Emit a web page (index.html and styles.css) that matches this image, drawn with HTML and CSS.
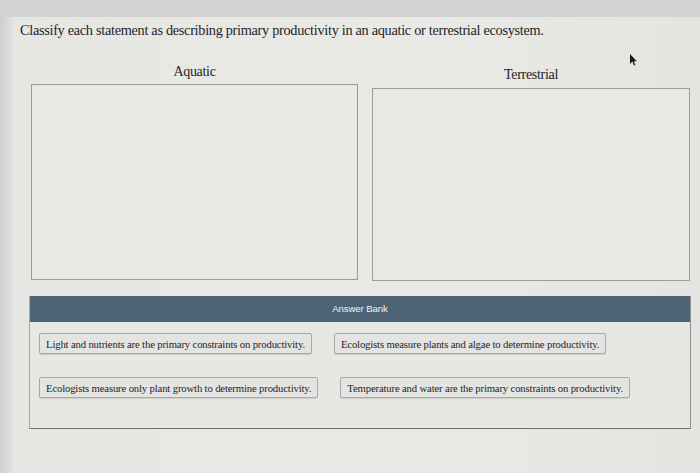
FILE: index.html
```html
<!DOCTYPE html>
<html>
<head>
<meta charset="utf-8">
<link rel="stylesheet" href="styles.css">
</head>
<body>
<div class="topbar"></div>
<main class="page">
  <h1 class="prompt">Classify each statement as describing primary productivity in an aquatic or terrestrial ecosystem.</h1>
  <div class="bins">
    <section class="bin">
      <div class="bin-label aq">Aquatic</div>
      <div class="bin-box aq-box"></div>
    </section>
    <section class="bin">
      <div class="bin-label tr">Terrestrial</div>
      <div class="bin-box tr-box"></div>
    </section>
  </div>
  <section class="bank">
    <div class="bank-head">Answer Bank</div>
    <div class="bank-body">
      <div class="bank-row">
        <div class="card">Light and nutrients are the primary constraints on productivity.</div>
        <div class="card">Ecologists measure plants and algae to determine productivity.</div>
      </div>
      <div class="bank-row">
        <div class="card">Ecologists measure only plant growth to determine productivity.</div>
        <div class="card">Temperature and water are the primary constraints on productivity.</div>
      </div>
    </div>
  </section>
</main>
<svg class="cursor" width="8" height="12" viewBox="0 0 8 12"><path d="M1 0 L1 10 L3.4 7.6 L5 11.5 L6.4 10.9 L4.8 7.2 L7.8 7.2 Z" fill="#1a1a1a"/></svg>
</body>
</html>
```
FILE: styles.css
```css
html, body {
  margin: 0;
  padding: 0;
}
body {
  position: relative;
  width: 700px;
  height: 473px;
  overflow: hidden;
  background: linear-gradient(90deg, #cfcfcd 0px, #dcdcda 10px, #e6e6e3 14px, #e9e9e6 60%, #e4e4e1 100%);
  font-family: "Liberation Serif", "Times New Roman", serif;
  color: #2a2a2a;
}
.topbar {
  height: 17px;
  background: #d3d3d1;
}
.page {
  padding: 0 0 0 20px;
}
.prompt {
  margin: 0;
  padding-top: 5px;
  font-size: 14.3px;
  font-weight: normal;
  line-height: 17px;
  letter-spacing: -0.3px;
  color: #1f1f1f;
}
.bins {
  display: grid;
  grid-template-columns: 327px 318px;
  column-gap: 14px;
  margin-left: 11px;
  margin-top: 25px;
}
.bin {
  display: flex;
  flex-direction: column;
}
.bin-label {
  font-size: 14px;
  text-align: center;
  line-height: 16px;
  color: #242424;
  letter-spacing: -0.3px;
}
.aq { height: 20px; }
.tr { height: 21px; padding-top: 3px; }
.bin-box {
  border: 1px solid #9d9d9b;
  background: #e9e9e6;
  box-shadow: inset 0 0 2px rgba(0,0,0,0.06);
}
.aq-box { height: 194px; }
.tr-box { height: 191px; }
.bank {
  margin-top: 15px;
  margin-left: 9px;
  width: 662px;
  border-right: 1px solid #8a8f93;
  border-bottom: 1px solid #6e6e6e;
  border-left: 1px solid #a8a8a8;
  box-sizing: border-box;
}
.bank-head {
  height: 26px;
  background: #4c6476;
  color: #f3f3f3;
  font-family: "Liberation Sans", Arial, sans-serif;
  font-size: 9.6px;
  line-height: 26px;
  text-align: center;
  letter-spacing: -0.1px;
}
.bank-body {
  background: #e7e7e4;
  padding: 11px 0 30px 9px;
  display: flex;
  flex-direction: column;
  gap: 23px;
}
.bank-row {
  display: flex;
  gap: 22px;
}
.card {
  height: 21px;
  box-sizing: border-box;
  padding: 0 6px;
  line-height: 20px;
  font-size: 10.7px;
  letter-spacing: -0.15px;
  border: 1px solid #a9a9a7;
  border-radius: 2px;
  background: #e4e4e2;
  box-shadow: 0 1px 1px rgba(0,0,0,0.12);
  color: #1f1f1f;
  white-space: nowrap;
}
.cursor {
  position: absolute;
  left: 629px;
  top: 54px;
}
```
